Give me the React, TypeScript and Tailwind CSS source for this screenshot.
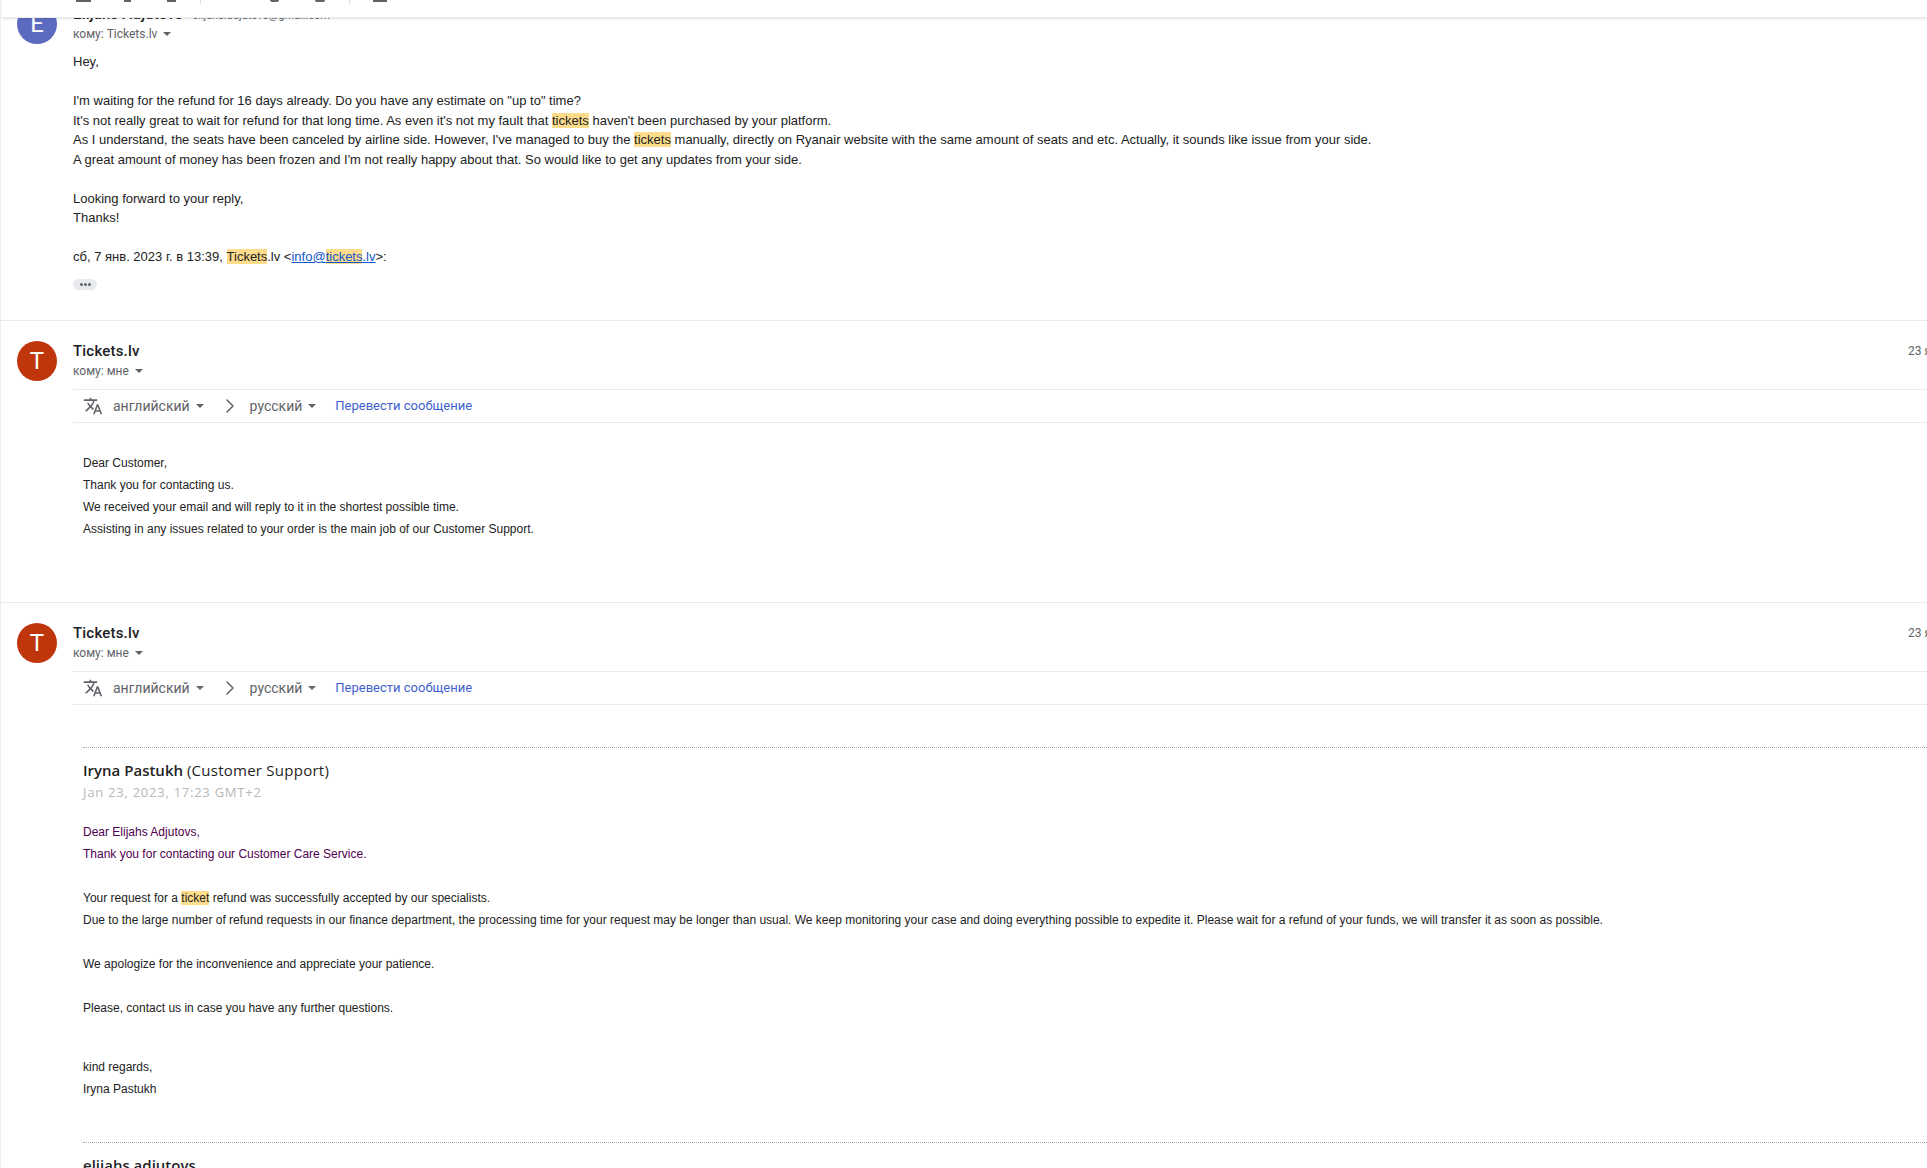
import { ChevronRight } from "lucide-react";

function TranslateIcon() {
  return (
    <svg className="w-[20px] h-[20px] text-[#5f6368]" viewBox="0 0 24 24" fill="currentColor">
      <path d="M12.87 15.07l-2.54-2.51.03-.03A17.52 17.52 0 0014.07 6H17V4h-7V2H8v2H1v1.99h11.17C11.5 7.92 10.44 9.75 9 11.35 8.07 10.32 7.3 9.19 6.69 8h-2c.73 1.63 1.73 3.17 2.98 4.56l-5.09 5.02L4 19l5-5 3.11 3.11.76-2.04zM18.5 10h-2L12 22h2l1.12-3h4.75L21 22h2l-4.5-12zm-2.62 7l1.62-4.33L19.12 17h-3.24z" />
    </svg>
  );
}

function Caret() {
  return <span className="inline-block w-0 h-0 border-x-[4px] border-x-transparent border-t-[4px] border-t-[#5f6368]" />;
}

function Hl({ children }: { children: React.ReactNode }) {
  return <span className="bg-[#fddc8c]">{children}</span>;
}

function TranslateBar() {
  return (
    <div className="ml-[73px] h-[34px] border-y border-[#e8eaed] flex items-center pl-[10px] text-[#5f6368] font-['Roboto',sans-serif]">
      <TranslateIcon />
      <span className="ml-[10px] text-[14px]">английский</span>
      <span className="ml-[6px] flex"><Caret /></span>
      <ChevronRight className="ml-[14px] w-[24px] h-[24px] text-[#5f6368]" strokeWidth={1.5} />
      <span className="ml-[8px] text-[14px]">русский</span>
      <span className="ml-[6px] flex"><Caret /></span>
      <span className="ml-[19px] text-[13px] text-[#3f5fd0]">Перевести сообщение</span>
    </div>
  );
}

function MessageHead() {
  return (
    <div className="flex h-[68px] pt-[20px]">
      <div className="ml-[17px] w-[40px] h-[40px] rounded-full bg-[#bf360c] text-white flex items-center justify-center text-[24px] font-['Roboto',sans-serif]">T</div>
      <div className="ml-[16px] font-['Roboto',sans-serif]">
        <div className="h-[20px] text-[15px] font-medium tracking-[0.2px] text-[#202124] leading-[20px]">Tickets.lv</div>
        <div className="h-[20px] text-[12px] text-[#5f6368] leading-[20px] flex items-center gap-[6px]">кому: мне <Caret /></div>
      </div>
      <div className="ml-auto mt-[1px] w-[19px] overflow-hidden whitespace-nowrap text-[12px] text-[#5f6368] font-['Roboto',sans-serif]">23 янв. 2023 г., 17:23</div>
    </div>
  );
}

export default function App() {
  return (
    <div className="w-[1927px] h-[1168px] overflow-hidden bg-white shadow-[inset_1px_0_0_#eceff1] font-['Liberation_Sans',sans-serif] text-[#222222]">
      {/* top toolbar, cut off by the window */}
      <div className="h-[18px] ml-[2px] border-b border-[#e8eaed] shadow-[0_1px_2px_rgba(60,64,67,0.15)] relative z-10 bg-white flex items-start overflow-hidden">
        <span className="ml-[74px] w-[15px] h-[2px] bg-[#5f6368]" />
        <span className="ml-[33px] w-[7px] h-[2px] bg-[#5f6368]" />
        <span className="ml-[36px] w-[9px] h-[2px] bg-[#5f6368]" />
        <span className="ml-[24px] w-px h-[4px] bg-[#dadce0]" />
        <span className="ml-[69px] w-[9px] h-[2px] rounded-b-full bg-[#5f6368]" />
        <span className="ml-[36px] w-[10px] h-[2px] rounded-b-full bg-[#5f6368]" />
        <span className="ml-[24px] w-px h-[4px] bg-[#dadce0]" />
        <span className="ml-[23px] w-[14px] h-[2px] bg-[#5f6368]" />
      </div>

      {/* first message */}
      <div className="h-[302px] flex flex-col">
        <div className="flex h-[52px] -mt-[14px]">
          <div className="ml-[17px] w-[40px] h-[40px] rounded-full bg-[#5c6bc0] text-white flex items-center justify-center text-[24px] font-['Roboto',sans-serif]">E</div>
          <div className="ml-[16px] font-['Roboto',sans-serif]">
            <div className="h-[20px] text-[15px] font-medium tracking-[0.2px] text-[#202124] leading-[20px] whitespace-nowrap">Elijahs Adjutovs <span className="font-normal text-[11px] tracking-normal text-[#5f6368]">&lt;elijahs.adjutovs@gmail.com&gt;</span></div>
            <div className="h-[20px] text-[12px] text-[#5f6368] leading-[20px] flex items-center gap-[6px]">кому: Tickets.lv <Caret /></div>
          </div>
        </div>
        <div className="ml-[73px] -mt-[4px] text-[13px] leading-[19.5px] whitespace-nowrap">
          <p>Hey,</p>
          <p>&nbsp;</p>
          <p>I'm waiting for the refund for 16 days already. Do you have any estimate on "up to" time?</p>
          <p>It's not really great to wait for refund for that long time. As even it's not my fault that <Hl>tickets</Hl> haven't been purchased by your platform.</p>
          <p>As I understand, the seats have been canceled by airline side. However, I've managed to buy the <Hl>tickets</Hl> manually, directly on Ryanair website with the same amount of seats and etc. Actually, it sounds like issue from your side.</p>
          <p>A great amount of money has been frozen and I'm not really happy about that. So would like to get any updates from your side.</p>
          <p>&nbsp;</p>
          <p>Looking forward to your reply,</p>
          <p>Thanks!</p>
          <p>&nbsp;</p>
          <p>сб, 7 янв. 2023 г. в 13:39, <Hl>Tickets</Hl>.lv &lt;<span className="text-[#1155cc] underline">info@<Hl>tickets</Hl>.lv</span>&gt;:</p>
        </div>
        <div className="ml-[73px] mt-[12px] w-[24px] h-[11px] rounded-full bg-[#e8eaed] flex items-center justify-center gap-[1px]">
          <span className="w-[3px] h-[3px] rounded-full bg-[#5f6368]" />
          <span className="w-[3px] h-[3px] rounded-full bg-[#5f6368]" />
          <span className="w-[3px] h-[3px] rounded-full bg-[#5f6368]" />
        </div>
      </div>

      {/* auto reply */}
      <div className="h-[282px] border-t border-[#e8eaed]">
        <MessageHead />
        <TranslateBar />
        <div className="ml-[83px] mt-[29px] text-[12px] leading-[22px]">
          <p>Dear Customer,</p>
          <p>Thank you for contacting us.</p>
          <p>We received your email and will reply to it in the shortest possible time.</p>
          <p>Assisting in any issues related to your order is the main job of our Customer Support.</p>
        </div>
      </div>

      {/* support answer */}
      <div className="border-t border-[#e8eaed]">
        <MessageHead />
        <TranslateBar />
        <div className="ml-[83px] mt-[42px] border-t border-dotted border-[#a8a8a8]" />
        <div className="ml-[83px] mt-[12px] font-['Open_Sans',sans-serif] text-[15px] leading-[20px] text-[#1f1f1f]"><b className="font-semibold">Iryna Pastukh</b> <span className="tracking-[0.25px]">(Customer Support)</span></div>
        <div className="ml-[83px] mt-[2px] font-['Open_Sans',sans-serif] text-[13px] tracking-[0.75px] leading-[20px] text-[#b8b8b8]">Jan 23, 2023, 17:23 GMT+2</div>
        <div className="ml-[83px] mt-[19px] text-[12px] leading-[22px] whitespace-nowrap">
          <p className="text-[#500050]">Dear Elijahs Adjutovs,</p>
          <p className="text-[#500050]">Thank you for contacting our Customer Care Service.</p>
          <p>&nbsp;</p>
          <p>Your request for a <Hl>ticket</Hl> refund was successfully accepted by our specialists.</p>
          <p>Due to the large number of refund requests in our finance department, the processing time for your request may be longer than usual. We keep monitoring your case and doing everything possible to expedite it. Please wait for a refund of your funds, we will transfer it as soon as possible.</p>
          <p>&nbsp;</p>
          <p>We apologize for the inconvenience and appreciate your patience.</p>
          <p>&nbsp;</p>
          <p>Please, contact us in case you have any further questions.</p>
          <p>&nbsp;</p>
          <p className="h-[15px]">&nbsp;</p>
          <p>kind regards,</p>
          <p>Iryna Pastukh</p>
        </div>
        <div className="ml-[83px] mt-[42px] border-t border-dotted border-[#a8a8a8]" />
        <div className="ml-[83px] mt-[12px] font-['Open_Sans',sans-serif] text-[15px] leading-[20px] font-semibold text-[#1f1f1f]">elijahs adjutovs</div>
      </div>
    </div>
  );
}
